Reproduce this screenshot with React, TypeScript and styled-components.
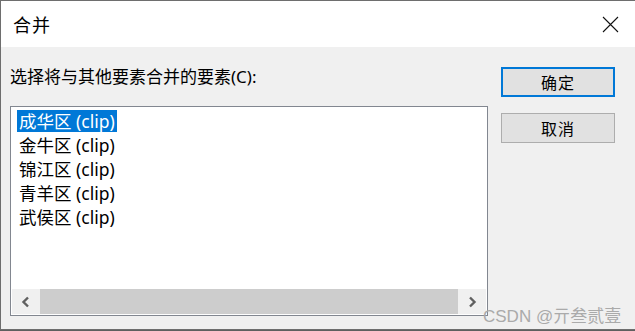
import React from "react";
import styled, { createGlobalStyle } from "styled-components";

const GlobalStyle = createGlobalStyle`
  html, body {
    margin: 0;
    padding: 0;
    background: #5f5f5f;
  }
  body {
    font-family: "Noto Sans", "Noto Sans CJK SC", sans-serif;
  }
`;

const Window = styled.div`
  position: relative;
  width: 634px;
  height: 328px;
  border-top: 1px solid #6e6e6e;
  border-left: 1px solid #6e6e6e;
  border-bottom: 1px solid #6e6e6e;
  background: #f0f0f0;
  display: flex;
  flex-direction: column;
  overflow: hidden;
`;

const TitleBar = styled.div`
  height: 46px;
  background: #fff;
  display: flex;
  align-items: center;
  justify-content: space-between;
  padding: 0 16px 0 12px;
  flex-shrink: 0;
`;

const Title = styled.span`
  font-family: "Noto Sans CJK SC", sans-serif;
  font-size: 18px;
  color: #000;
  letter-spacing: 1px;
`;

const CloseBtn = styled.div`
  width: 18px;
  height: 18px;
  display: flex;
  align-items: center;
  justify-content: center;
`;

const Body = styled.div`
  flex: 1;
  display: flex;
  padding-left: 9px;
`;

const LeftCol = styled.div`
  width: 478px;
  display: flex;
  flex-direction: column;
`;

const Label = styled.div`
  margin-top: 18px;
  height: 24px;
  line-height: 24px;
  font-size: 17px;
  color: #000;
  font-family: "Noto Sans", "Noto Sans CJK SC", sans-serif;
`;

const ListBox = styled.div`
  margin-top: 17px;
  height: 206px;
  border: 1px solid #828790;
  background: #fff;
  padding: 1px;
  display: flex;
  flex-direction: column;
`;

const Items = styled.div`
  flex: 1;
  padding: 1px 0 0 5px;
`;

const Item = styled.div`
  height: 24px;
  display: flex;
  align-items: center;
`;

const ItemText = styled.span<{ $selected?: boolean }>`
  font-size: 17.5px;
  line-height: 22px;
  padding: 0 2px;
  color: ${(p) => (p.$selected ? "#fff" : "#000")};
  background: ${(p) => (p.$selected ? "#0078d7" : "transparent")};
`;

const HScroll = styled.div`
  height: 25px;
  background: #f0f0f0;
  display: flex;
  align-items: stretch;
`;

const Arrow = styled.div`
  width: 28px;
  display: flex;
  align-items: center;
  justify-content: center;
`;

const Thumb = styled.div`
  flex: 1;
  background: #cdcdcd;
`;

const RightCol = styled.div`
  margin-left: 13px;
  padding-top: 20px;
  display: flex;
  flex-direction: column;
  gap: 16px;
`;

const Button = styled.div<{ $default?: boolean }>`
  width: 114px;
  height: 30px;
  box-sizing: border-box;
  background: #e1e1e1;
  border: ${(p) => (p.$default ? "2px solid #0078d7" : "1px solid #adadad")};
  display: flex;
  align-items: center;
  justify-content: center;
  font-family: "Noto Sans CJK SC", sans-serif;
  font-size: 16px;
  color: #000;
  letter-spacing: 1px;
`;

const Watermark = styled.div`
  position: absolute;
  left: 482px;
  top: 301px;
  font-family: "Liberation Sans", "Noto Sans CJK SC", sans-serif;
  font-size: 17px;
  color: #aaaaaa;
  white-space: nowrap;
`;

const items = ["成华区", "金牛区", "锦江区", "青羊区", "武侯区"];

const Chevron = ({ dir }: { dir: "left" | "right" }) => (
  <svg width="10" height="12" viewBox="0 0 10 12">
    <polyline
      points={dir === "left" ? "7,1.5 2.5,6 7,10.5" : "3,1.5 7.5,6 3,10.5"}
      fill="none"
      stroke="#606060"
      strokeWidth="2.4"
    />
  </svg>
);

export default function App() {
  return (
    <>
      <GlobalStyle />
      <Window>
        <TitleBar>
          <Title>合并</Title>
          <CloseBtn>
            <svg width="17" height="17" viewBox="0 0 17 17">
              <path d="M1 1 L16 16 M16 1 L1 16" stroke="#111" strokeWidth="1.1" />
            </svg>
          </CloseBtn>
        </TitleBar>
        <Body>
          <LeftCol>
            <Label>选择将与其他要素合并的要素(C):</Label>
            <ListBox>
              <Items>
                {items.map((name, i) => (
                  <Item key={name}>
                    <ItemText $selected={i === 0}>{name} (clip)</ItemText>
                  </Item>
                ))}
              </Items>
              <HScroll>
                <Arrow>
                  <Chevron dir="left" />
                </Arrow>
                <Thumb />
                <Arrow>
                  <Chevron dir="right" />
                </Arrow>
              </HScroll>
            </ListBox>
          </LeftCol>
          <RightCol>
            <Button $default>确定</Button>
            <Button>取消</Button>
          </RightCol>
        </Body>
        <Watermark>CSDN @亓叁贰壹</Watermark>
      </Window>
    </>
  );
}
